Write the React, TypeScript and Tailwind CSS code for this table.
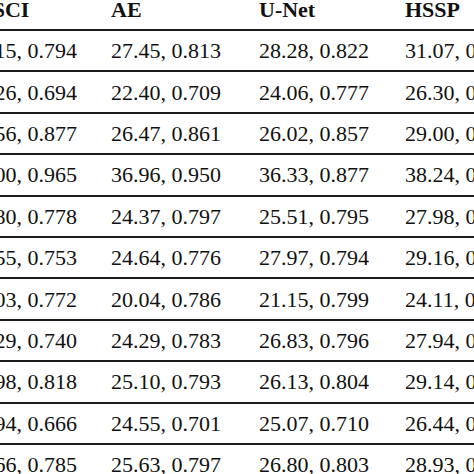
const headers = ['DeSCI', 'AE', 'U-Net', 'HSSP'];

const rows: string[][] = [
    ['27.15, 0.794', '27.45, 0.813', '28.28, 0.822', '31.07, 0.876'],
    ['23.26, 0.694', '22.40, 0.709', '24.06, 0.777', '26.30, 0.856'],
    ['25.56, 0.877', '26.47, 0.861', '26.02, 0.857', '29.00, 0.903'],
    ['36.00, 0.965', '36.96, 0.950', '36.33, 0.877', '38.24, 0.970'],
    ['25.80, 0.778', '24.37, 0.797', '25.51, 0.795', '27.98, 0.855'],
    ['25.55, 0.753', '24.64, 0.776', '27.97, 0.794', '29.16, 0.842'],
    ['21.03, 0.772', '20.04, 0.786', '21.15, 0.799', '24.11, 0.855'],
    ['24.29, 0.740', '24.29, 0.783', '26.83, 0.796', '27.94, 0.858'],
    ['23.98, 0.818', '25.10, 0.793', '26.13, 0.804', '29.14, 0.876'],
    ['23.94, 0.666', '24.55, 0.701', '25.07, 0.710', '26.44, 0.787'],
    ['24.66, 0.785', '25.63, 0.797', '26.80, 0.803', '28.93, 0.852'],
];

const cols = 'grid grid-cols-[144px_148px_146px_148px] ml-[-33px] w-[586px]';

export default function App() {
    return (
        <div className="w-[474px] h-[474px] overflow-hidden bg-white text-[#111] text-[22px] font-['Liberation_Serif',serif]">
            {/* header */}
            <div className={`${cols} h-[29px] items-start leading-[19px] font-bold`}>
                {headers.map((h) => (
                    <div key={h} className="whitespace-nowrap">{h}</div>
                ))}
            </div>

            {/* rows */}
            {rows.map((r, i) => (
                <div key={i} className="border-t-2 border-[#1c1c1c] h-[41.4px]">
                    <div className={`${cols} h-full items-center`}>
                        {r.map((c, j) => (
                            <div key={j} className="whitespace-nowrap">{c}</div>
                        ))}
                    </div>
                </div>
            ))}
        </div>
    );
}
